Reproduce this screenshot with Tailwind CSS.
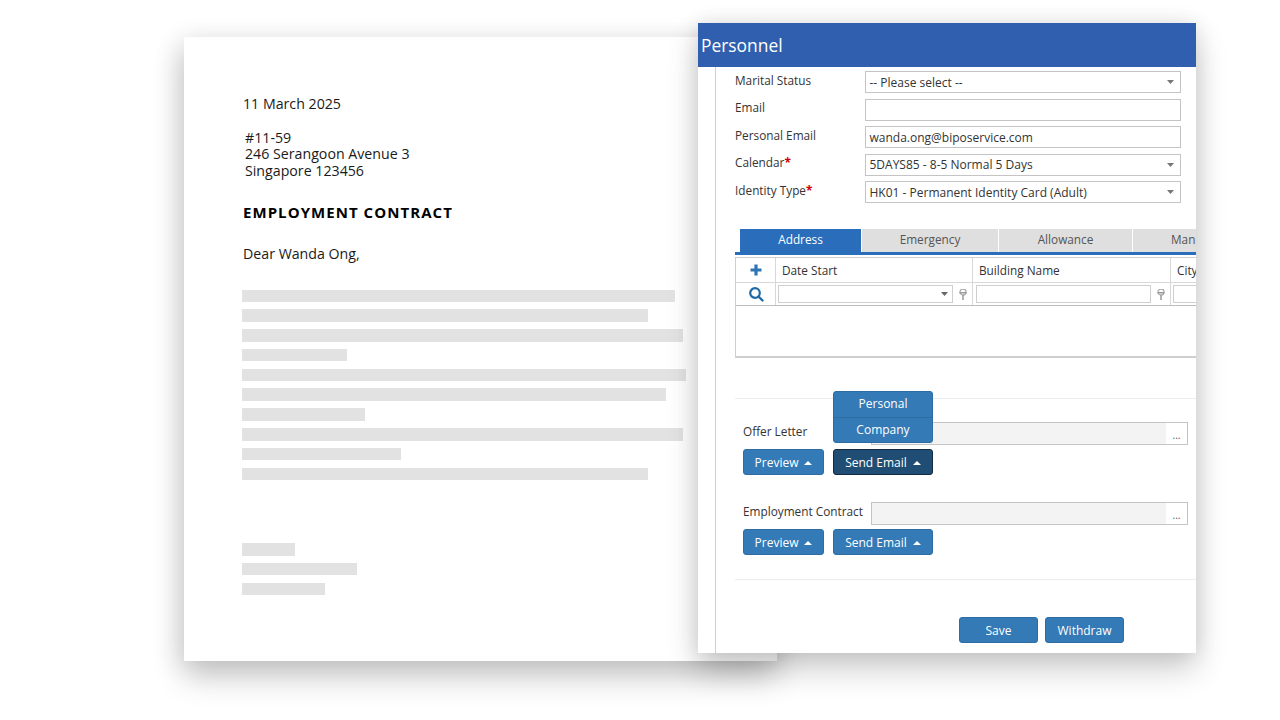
<!DOCTYPE html>
<html lang="en">
<head>
    <meta charset="UTF-8">
    <title>Personnel</title>
    <script src="https://cdn.jsdelivr.net/npm/@tailwindcss/browser@4"></script>
</head>
<body class="bg-white">
    <div class="relative w-[1280px] h-[720px] overflow-hidden bg-white font-['Open_Sans','Noto_Sans',sans-serif]">

        <!-- Letter -->
        <div class="absolute left-[184px] top-[37px] w-[593px] h-[624px] bg-white pl-[59px] pt-[58px] text-[14.2px] text-[#1a1a1a] shadow-[0_16px_30px_rgba(0,0,0,0.2),-4px_4px_26px_rgba(0,0,0,0.1)]">
            <p class="leading-[17px]">11 March 2025</p>
            <div class="mt-[17.5px] ml-[2px] leading-[16.5px]">
                <p>#11-59</p>
                <p>246 Serangoon Avenue 3</p>
                <p>Singapore 123456</p>
            </div>
            <p class="mt-[24.5px] leading-[17px] text-[15px] font-bold tracking-[1.05px] text-black">EMPLOYMENT CONTRACT</p>
            <p class="mt-[24px] leading-[17px]">Dear Wanda Ong,</p>

            <div class="mt-[28px] -ml-px flex flex-col gap-[7.3px]">
                <div class="h-[12.5px] w-[433px] bg-[#e2e2e2]"></div>
                <div class="h-[12.5px] w-[406px] bg-[#e2e2e2]"></div>
                <div class="h-[12.5px] w-[441px] bg-[#e2e2e2]"></div>
                <div class="h-[12.5px] w-[105px] bg-[#e2e2e2]"></div>
                <div class="h-[12.5px] w-[444px] bg-[#e2e2e2]"></div>
                <div class="h-[12.5px] w-[424px] bg-[#e2e2e2]"></div>
                <div class="h-[12.5px] w-[123px] bg-[#e2e2e2]"></div>
                <div class="h-[12.5px] w-[441px] bg-[#e2e2e2]"></div>
                <div class="h-[12.5px] w-[159px] bg-[#e2e2e2]"></div>
                <div class="h-[12.5px] w-[406px] bg-[#e2e2e2]"></div>
            </div>
            <div class="mt-[63px] -ml-px flex flex-col gap-[7.3px]">
                <div class="h-[12.5px] w-[53px] bg-[#e2e2e2]"></div>
                <div class="h-[12.5px] w-[115px] bg-[#e2e2e2]"></div>
                <div class="h-[12.5px] w-[83px] bg-[#e2e2e2]"></div>
            </div>
        </div>

        <!-- Personnel window -->
        <div class="absolute left-[698px] top-[23px] w-[498px] h-[630px] bg-white flex flex-col overflow-hidden text-[11.8px] text-[#333] shadow-[0_16px_30px_rgba(0,0,0,0.2),0_0_20px_rgba(0,0,0,0.1)]">
            <div class="h-[44px] shrink-0 bg-[#2f5fae] pl-[3px] flex items-center text-[17.4px] text-white">Personnel</div>

            <div class="flex-1 ml-[17px] border-l border-[#cfcfcf] pt-[4px] min-h-0">
                <!-- Form fields -->
                <div class="pl-[19px] pr-[15px] flex flex-col gap-[5.5px]">
                    <div class="flex">
                        <label class="w-[129.5px] pt-[0.5px] leading-[17px]">Marital Status</label>
                        <div class="flex-1 h-[22px] border border-[#c4c4c4] flex items-center justify-between pl-[4px] pr-[6px] text-[12px]">
                            <span class="pt-px">-- Please select --</span>
                            <svg class="w-[7px] h-[4px]" viewBox="0 0 7 4"><path d="M0 0h7L3.5 4z" fill="#777"/></svg>
                        </div>
                    </div>
                    <div class="flex">
                        <label class="w-[129.5px] pt-[0.5px] leading-[17px]">Email</label>
                        <div class="flex-1 h-[22px] border border-[#c4c4c4]"></div>
                    </div>
                    <div class="flex">
                        <label class="w-[129.5px] pt-[0.5px] leading-[17px]">Personal Email</label>
                        <div class="flex-1 h-[22px] border border-[#c4c4c4] flex items-center pl-[4px] text-[12px]"><span class="pt-px">wanda.ong@biposervice.com</span></div>
                    </div>
                    <div class="flex">
                        <label class="w-[129.5px] pt-[0.5px] leading-[17px]">Calendar<span class="text-[#c00] font-bold">*</span></label>
                        <div class="flex-1 h-[22px] border border-[#c4c4c4] flex items-center justify-between pl-[4px] pr-[6px] text-[12px]">
                            <span class="pt-px">5DAYS85 - 8-5 Normal 5 Days</span>
                            <svg class="w-[7px] h-[4px]" viewBox="0 0 7 4"><path d="M0 0h7L3.5 4z" fill="#777"/></svg>
                        </div>
                    </div>
                    <div class="flex">
                        <label class="w-[129.5px] pt-[0.5px] leading-[17px]">Identity Type<span class="text-[#c00] font-bold">*</span></label>
                        <div class="flex-1 h-[22px] border border-[#c4c4c4] flex items-center justify-between pl-[4px] pr-[6px] text-[12px]">
                            <span class="pt-px">HK01 - Permanent Identity Card (Adult)</span>
                            <svg class="w-[7px] h-[4px]" viewBox="0 0 7 4"><path d="M0 0h7L3.5 4z" fill="#777"/></svg>
                        </div>
                    </div>
                </div>

                <!-- Tabs -->
                <div class="mt-[26px] pl-[19px] overflow-hidden">
                    <div class="flex pl-[5px] gap-px h-[23px] text-center whitespace-nowrap">
                        <div class="w-[121px] shrink-0 bg-[#2a6ebb] text-white leading-[21px]">Address</div>
                        <div class="w-[136px] shrink-0 bg-[#dfdfdf] text-[#555] leading-[21px]">Emergency</div>
                        <div class="w-[133px] shrink-0 bg-[#dfdfdf] text-[#555] leading-[21px]">Allowance</div>
                        <div class="w-[120px] shrink-0 bg-[#dfdfdf] text-[#555] leading-[21px] pl-[38px] text-left">Man</div>
                    </div>
                    <div class="h-[3px] bg-[#2a6ebb]"></div>

                    <!-- Grid -->
                    <div class="mt-[2px] border border-[#cfcfcf] border-b-2 border-r-0 h-[101px] overflow-hidden">
                        <div class="flex h-[25px] border-b border-[#d8d8d8] whitespace-nowrap">
                            <div class="w-[40px] shrink-0 border-r border-[#d8d8d8] flex items-center justify-center">
                                <svg class="w-[14px] h-[14px]" viewBox="0 0 14 14"><path d="M7 1.5v11M1.5 7h11" stroke="#2f74b5" stroke-width="3.2" fill="none"/></svg>
                            </div>
                            <div class="w-[197px] shrink-0 border-r border-[#d8d8d8] pl-[6px] leading-[24px]">Date Start</div>
                            <div class="w-[198px] shrink-0 border-r border-[#d8d8d8] pl-[6px] leading-[24px]">Building Name</div>
                            <div class="flex-1 pl-[6px] leading-[24px]">City</div>
                        </div>
                        <div class="flex h-[23px] border-b border-[#bdbdbd]">
                            <div class="w-[40px] shrink-0 border-r border-[#d8d8d8] flex items-center justify-center">
                                <svg class="w-[16px] h-[16px]" viewBox="0 0 16 16"><circle cx="7" cy="7" r="4.8" stroke="#1f6aa5" stroke-width="2.2" fill="none"/><path d="M10.5 10.5l4 4" stroke="#1f6aa5" stroke-width="2.4" stroke-linecap="round"/></svg>
                            </div>
                            <div class="w-[197px] shrink-0 border-r border-[#d8d8d8] flex items-center pl-[2px] gap-[5px]">
                                <div class="w-[175px] h-[18px] border border-[#cfcfcf] flex items-center justify-end pr-[4px]">
                                    <svg class="w-[7px] h-[4px]" viewBox="0 0 7 4"><path d="M0 0h7L3.5 4z" fill="#666"/></svg>
                                </div>
                                <svg class="w-[10px] h-[11px]" viewBox="0 0 10 11"><circle cx="5" cy="3" r="3" fill="none" stroke="#aaa" stroke-width="1.3"/><path d="M1.5 3.8h7M5 6v5" stroke="#999" stroke-width="1.5"/></svg>
                            </div>
                            <div class="w-[198px] shrink-0 border-r border-[#d8d8d8] flex items-center pl-[3px] gap-[5px]">
                                <div class="w-[175px] h-[18px] border border-[#cfcfcf]"></div>
                                <svg class="w-[10px] h-[11px]" viewBox="0 0 10 11"><circle cx="5" cy="3" r="3" fill="none" stroke="#aaa" stroke-width="1.3"/><path d="M1.5 3.8h7M5 6v5" stroke="#999" stroke-width="1.5"/></svg>
                            </div>
                            <div class="flex-1 flex items-center pl-[2px]">
                                <div class="w-[60px] h-[18px] border border-[#cfcfcf]"></div>
                            </div>
                        </div>
                    </div>
                </div>

                <div class="mt-[40px] ml-[19px] border-t border-[#ececec]"></div>

                <!-- Documents -->
                <div class="relative pl-[27px] pr-[8px] pt-[23px]">
                    <div class="flex items-center gap-[7px] h-[23px]">
                        <span class="w-[121px] shrink-0 pb-[4px]">Offer Letter</span>
                        <div class="flex-1 h-[23px] border border-[#c4c4c4] flex bg-[#f3f3f3]">
                            <div class="flex-1"></div>
                            <div class="w-[21px] bg-white text-center text-[10px] leading-[24px] text-[#555]">...</div>
                        </div>
                    </div>
                    <div class="mt-[4px] flex gap-[9px] text-[12px]">
                        <button class="w-[81px] h-[26px] pt-px rounded-[3px] bg-[#337ab7] border border-[#2e6da4] text-white flex items-center justify-center gap-[6px]">Preview
                            <svg class="w-[8px] h-[4px]" viewBox="0 0 8 4"><path d="M0 4h8L4 0z" fill="#fff"/></svg>
                        </button>
                        <button class="w-[100px] h-[26px] pt-px rounded-[3px] bg-[#204d74] border border-[#122b40] text-white flex items-center justify-center gap-[6px]">Send Email
                            <svg class="w-[8px] h-[4px]" viewBox="0 0 8 4"><path d="M0 4h8L4 0z" fill="#fff"/></svg>
                        </button>
                    </div>

                    <!-- Send Email menu -->
                    <div class="absolute left-[117px] top-[-8px] w-[100px] h-[52px] rounded-[3px] bg-[#337ab7] border border-[#2e6da4] text-white text-[12px] text-center flex flex-col">
                        <div class="h-[26px] leading-[24px] border-b border-[#2e6da4]">Personal</div>
                        <div class="flex-1 leading-[24px]">Company</div>
                    </div>

                    <div class="mt-[27px] flex items-center gap-[7px] h-[23px]">
                        <span class="w-[121px] shrink-0 pb-[4px]">Employment Contract</span>
                        <div class="flex-1 h-[23px] border border-[#c4c4c4] flex bg-[#f3f3f3]">
                            <div class="flex-1"></div>
                            <div class="w-[21px] bg-white text-center text-[10px] leading-[24px] text-[#555]">...</div>
                        </div>
                    </div>
                    <div class="mt-[4px] flex gap-[9px] text-[12px]">
                        <button class="w-[81px] h-[26px] pt-px rounded-[3px] bg-[#337ab7] border border-[#2e6da4] text-white flex items-center justify-center gap-[6px]">Preview
                            <svg class="w-[8px] h-[4px]" viewBox="0 0 8 4"><path d="M0 4h8L4 0z" fill="#fff"/></svg>
                        </button>
                        <button class="w-[100px] h-[26px] pt-px rounded-[3px] bg-[#337ab7] border border-[#2e6da4] text-white flex items-center justify-center gap-[6px]">Send Email
                            <svg class="w-[8px] h-[4px]" viewBox="0 0 8 4"><path d="M0 4h8L4 0z" fill="#fff"/></svg>
                        </button>
                    </div>
                </div>

                <div class="mt-[24px] ml-[19px] border-t border-[#ececec]"></div>

                <!-- Actions -->
                <div class="mt-[37px] pl-[243px] flex gap-[7px] text-[12px]">
                    <button class="w-[79px] h-[26px] pt-[2px] rounded-[3px] bg-[#337ab7] border border-[#2e6da4] text-white">Save</button>
                    <button class="w-[79px] h-[26px] pt-[2px] rounded-[3px] bg-[#337ab7] border border-[#2e6da4] text-white">Withdraw</button>
                </div>
            </div>
        </div>
    </div>
</body>
</html>
